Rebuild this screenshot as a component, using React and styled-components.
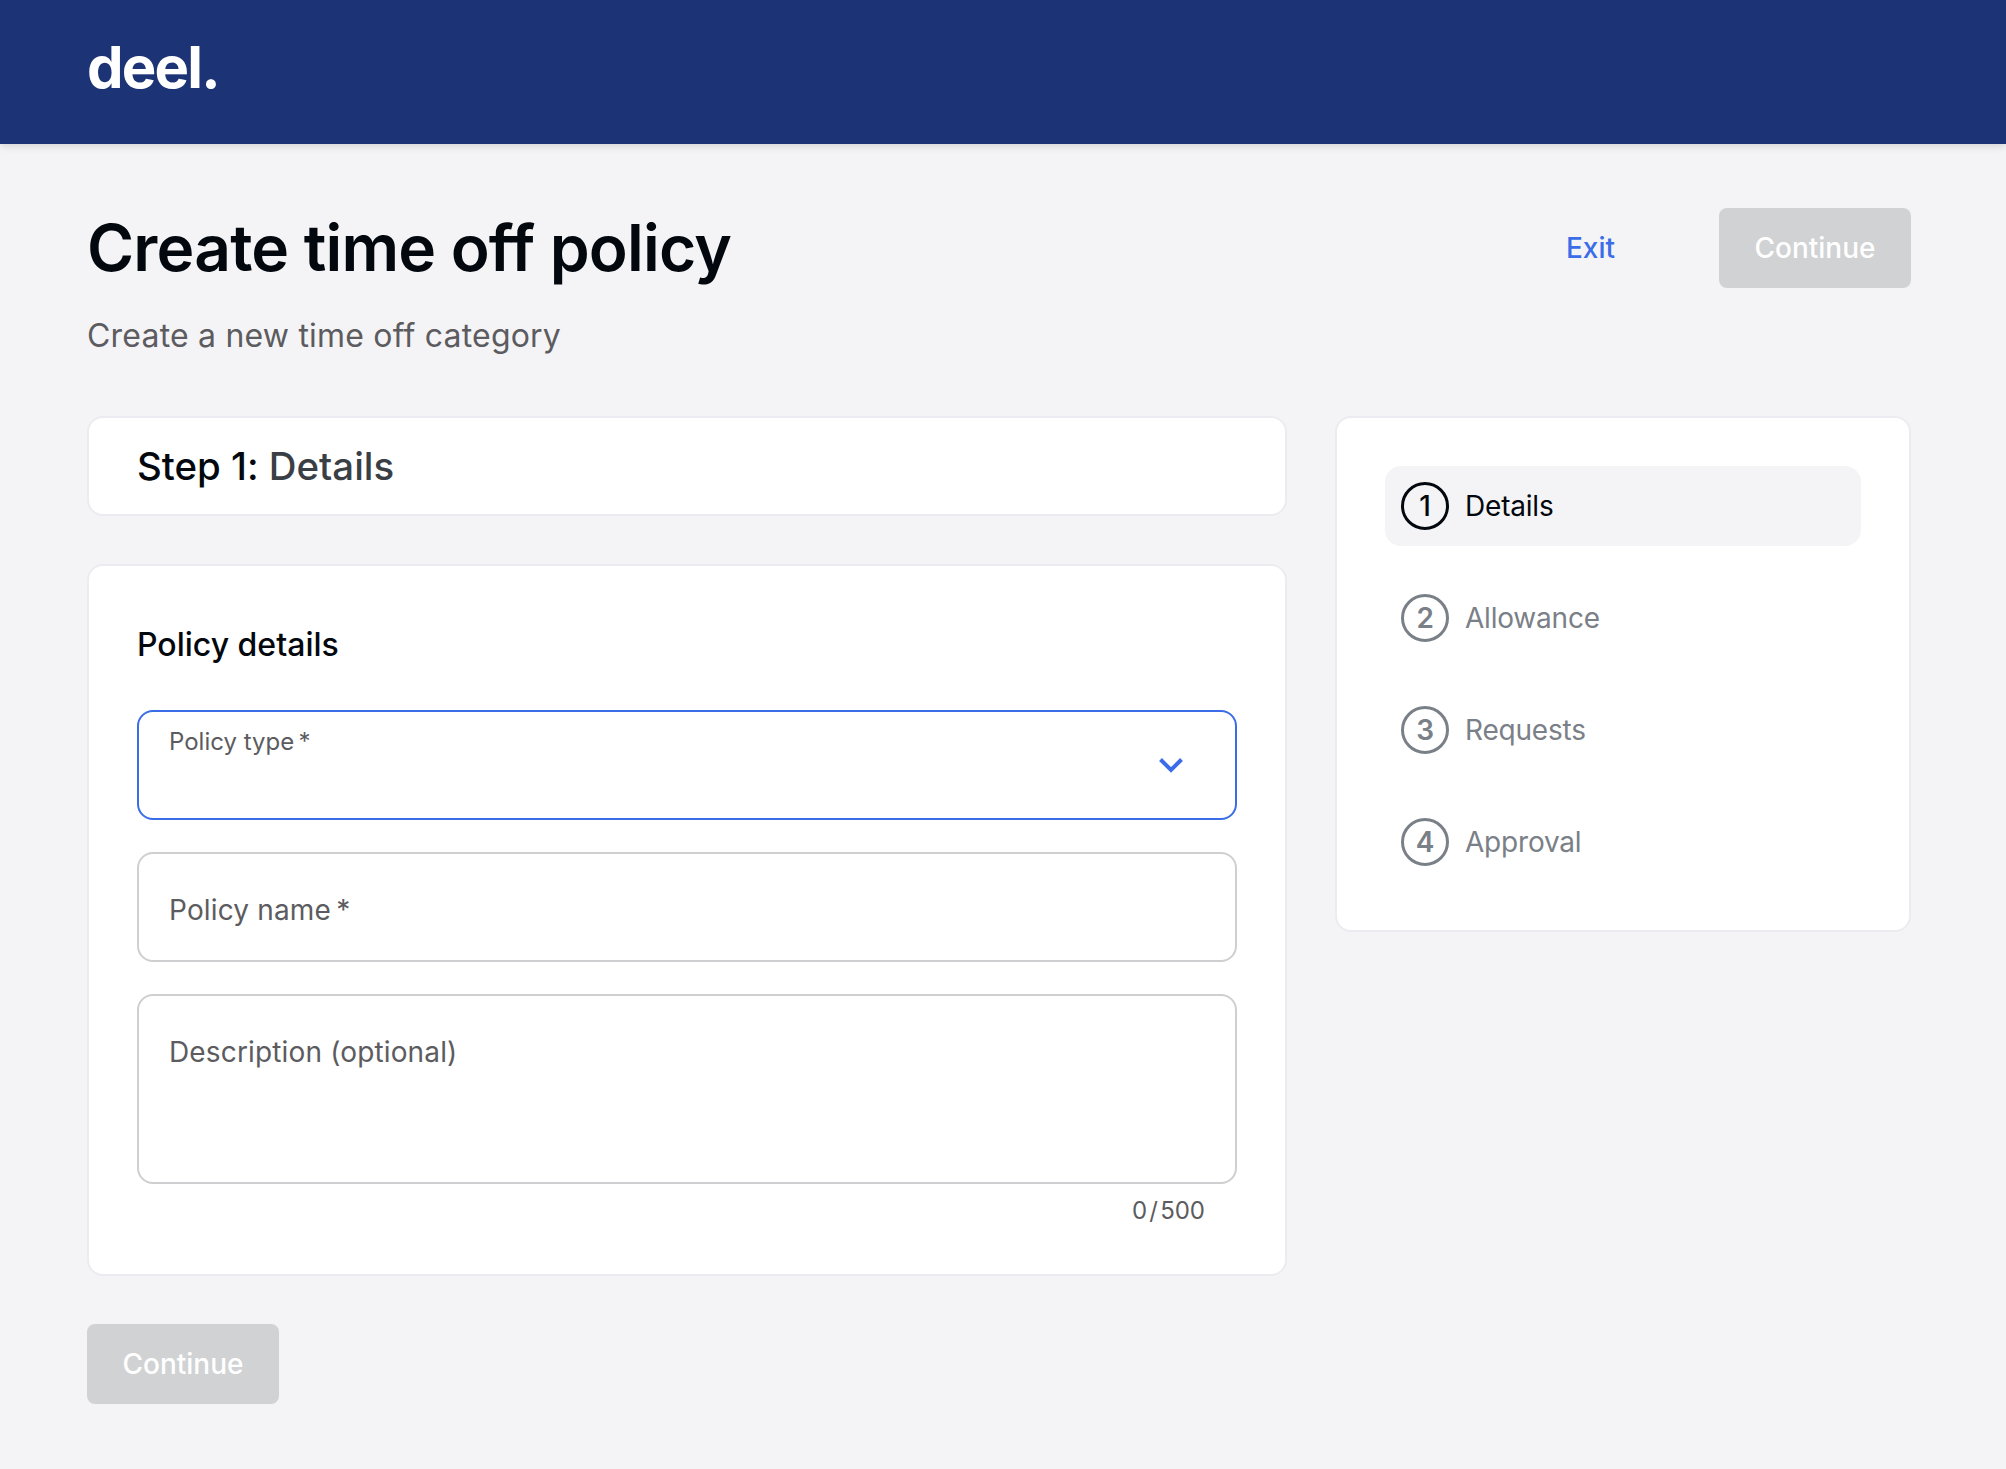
import React from "react";
import styled, { createGlobalStyle } from "styled-components";

const steps = ["Details", "Allowance", "Requests", "Approval"];

const App = () => {
  return (
    <>
      <GlobalStyle />
      <Header>
        <Logo>deel.</Logo>
      </Header>
      <Main>
        <TopRow>
          <div>
            <Title>Create time off policy</Title>
            <Subtitle>Create a new time off category</Subtitle>
          </div>
          <Actions>
            <ExitButton>Exit</ExitButton>
            <ContinueButton disabled>Continue</ContinueButton>
          </Actions>
        </TopRow>
        <Columns>
          <LeftColumn>
            <StepCard>
              <StepTitle>
                Step 1: <span>Details</span>
              </StepTitle>
            </StepCard>
            <FormCard>
              <SectionTitle>Policy details</SectionTitle>
              <Fields>
                <Field $active $height={110} $top={14}>
                  <SmallLabel>Policy type{"\u2009"}*</SmallLabel>
                  <Chevron viewBox="0 0 24 15" fill="none">
                    <path
                      d="M1.5 1.5L12 12L22.5 1.5"
                      stroke="#3b6de8"
                      strokeWidth="4"
                    />
                  </Chevron>
                </Field>
                <Field $height={110} $top={38}>
                  <FieldLabel>Policy name{"\u2009"}*</FieldLabel>
                </Field>
                <Field $height={190} $top={38}>
                  <FieldLabel>Description (optional)</FieldLabel>
                </Field>
              </Fields>
              <Counter>0{"\u200a"}/{"\u200a"}500</Counter>
            </FormCard>
            <div>
              <ContinueButton disabled>Continue</ContinueButton>
            </div>
          </LeftColumn>
          <SideCard>
            {steps.map((step, i) => (
              <StepItem key={step} $current={i === 0}>
                <StepNumber $current={i === 0}>{i + 1}</StepNumber>
                {step}
              </StepItem>
            ))}
          </SideCard>
        </Columns>
      </Main>
    </>
  );
};

export default App;

const GlobalStyle = createGlobalStyle`
  * {
    box-sizing: border-box;
  }
  body {
    margin: 0;
    background: #f4f4f6;
    font-family: Inter, "Liberation Sans", sans-serif;
    font-variant-ligatures: none;
  }
`;

const Header = styled.header`
  height: 144px;
  background: #1c3476;
  padding: 27px 87px 0;
  box-shadow: 0 2px 8px rgba(0, 0, 0, 0.14);
`;

const Logo = styled.div`
  color: #fff;
  font-size: 58px;
  line-height: 80px;
  font-weight: 700;
  letter-spacing: -1.8px;
`;

const Main = styled.main`
  width: 1911px;
  padding: 64px 0 64px 87px;
`;

const TopRow = styled.div`
  display: flex;
  justify-content: space-between;
  align-items: flex-start;
  margin-bottom: 58px;
`;

const Title = styled.h1`
  margin: 0;
  font-size: 64px;
  line-height: 80px;
  font-weight: 600;
  letter-spacing: -0.8px;
  color: #03080f;
`;

const Subtitle = styled.p`
  margin: 26px 0 0;
  font-size: 32px;
  line-height: 44px;
  letter-spacing: 0.2px;
  color: #5c5c60;
`;

const Actions = styled.div`
  display: flex;
  align-items: center;
  gap: 104px;
`;

const ExitButton = styled.button`
  border: none;
  background: none;
  padding: 0;
  font: inherit;
  font-size: 28px;
  font-weight: 500;
  color: #3b6de8;
`;

const ContinueButton = styled.button`
  width: 192px;
  height: 80px;
  border: none;
  border-radius: 8px;
  background: #d1d2d4;
  color: #fff;
  font: inherit;
  font-size: 28px;
  font-weight: 500;
`;

const Columns = styled.div`
  display: grid;
  grid-template-columns: 1200px 576px;
  gap: 48px;
  align-items: start;
`;

const LeftColumn = styled.div`
  display: flex;
  flex-direction: column;
  gap: 48px;
`;

const Card = styled.section`
  background: #fff;
  border: 2px solid #ebebf1;
  border-radius: 16px;
`;

const StepCard = styled(Card)`
  height: 100px;
  padding: 0 48px;
  display: flex;
  align-items: center;
`;

const StepTitle = styled.h2`
  margin: 0;
  font-size: 38.4px;
  font-weight: 500;
  color: #03080f;

  span {
    color: #3a3f46;
  }
`;

const FormCard = styled(Card)`
  height: 712px;
  padding: 58px 48px 0;
`;

const SectionTitle = styled.h3`
  margin: 0 0 44px;
  font-size: 32px;
  line-height: 42px;
  font-weight: 500;
  color: #03080f;
`;

const Fields = styled.div`
  display: flex;
  flex-direction: column;
  gap: 32px;
`;

const Field = styled.div`
  display: flex;
  justify-content: space-between;
  align-items: flex-start;
  height: ${(p) => p.$height}px;
  padding: ${(p) => p.$top}px 52px 0 30px;
  background: #fff;
  border: 2px solid ${(p) => (p.$active ? "#3b6de8" : "#cfcfd1")};
  border-radius: 16px;
`;

const FieldLabel = styled.label`
  font-size: 28px;
  line-height: 36px;
  letter-spacing: 0.15px;
  color: #5c5c60;
`;

const SmallLabel = styled.label`
  font-size: 24px;
  line-height: 32px;
  color: #5c5c60;
`;

const Chevron = styled.svg`
  width: 24px;
  height: 15px;
  margin-top: 32px;
`;

const Counter = styled.div`
  margin-top: 11px;
  padding-right: 32px;
  text-align: right;
  font-size: 24px;
  line-height: 32px;
  color: #5c5c60;
`;

const SideCard = styled(Card)`
  height: 516px;
  padding: 48px;
  display: flex;
  flex-direction: column;
  gap: 32px;
`;

const StepItem = styled.div`
  display: flex;
  align-items: center;
  gap: 16px;
  height: 80px;
  padding-left: 16px;
  border-radius: 16px;
  font-size: 28px;
  letter-spacing: -0.2px;
  color: ${(p) => (p.$current ? "#03080f" : "#7a8087")};
  background: ${(p) => (p.$current ? "#f4f4f6" : "transparent")};
`;

const StepNumber = styled.span`
  display: flex;
  align-items: center;
  justify-content: center;
  width: 48px;
  height: 48px;
  border: 3px solid ${(p) => (p.$current ? "#03080f" : "#7a8087")};
  border-radius: 50%;
  font-size: 28px;
  font-weight: ${(p) => (p.$current ? 500 : 600)};
`;
